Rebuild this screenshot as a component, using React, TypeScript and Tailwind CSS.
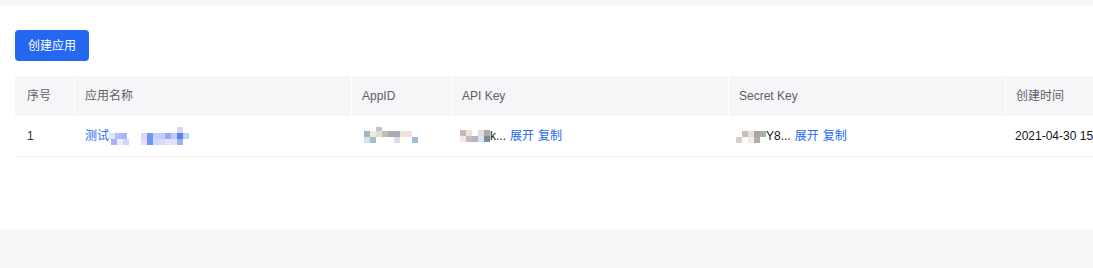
import React from "react";

type Cell = [number, number, string];

const Mosaic = ({ w, h, cells }: { w: number; h: number; cells: Cell[] }) => (
	<svg width={w} height={h} viewBox={`0 0 ${w} ${h}`} className="shrink-0 overflow-visible">
		{cells.map(([x, y, c], i) => (
			<rect key={i} x={x} y={y} width={6} height={6} fill={c} />
		))}
	</svg>
);

const nameCells: Cell[] = [
	[0, 6, "#dde8fb"],
	[6, 6, "#b4c0f5"],
	[12, 6, "#aab5f3"],
	[32, 6, "#d8d6f6"],
	[38, 6, "#6d97f0"],
	[44, 6, "#c8cff8"],
	[50, 6, "#c6c8f8"],
	[56, 6, "#9aa8f4"],
	[62, 6, "#c4c8f6"],
	[68, 6, "#5d7fe8"],
	[74, 6, "#b8d6fa"],
	[2, 12, "#a6b6f5"],
	[8, 12, "#e8ecfd"],
	[14, 12, "#d4d6f9"],
	[32, 12, "#e8defb"],
	[38, 12, "#6d97f0"],
	[44, 12, "#c4dcfb"],
	[50, 12, "#dcd8f8"],
	[56, 12, "#e6e2fb"],
	[62, 12, "#dfe3fb"],
	[68, 12, "#9fb2f2"],
	[68, 0, "#d4d8f8"],
];

const appIdCells: Cell[] = [
	[12, 0, "#c4c0cc"],
	[0, 4, "#a9b4bb"],
	[6, 4, "#f1ebdd"],
	[12, 4, "#e3dcd2"],
	[18, 4, "#c1bdb7"],
	[24, 4, "#aeacb2"],
	[30, 4, "#a9aab2"],
	[36, 4, "#f1e6d6"],
	[42, 4, "#f1dede"],
	[0, 10, "#d4e2ef"],
	[6, 10, "#9dc0cb"],
	[30, 10, "#d6dcec"],
	[48, 10, "#98c0d8"],
];

const apiCells: Cell[] = [
	[0, 2, "#cdb4c2"],
	[6, 2, "#ece4d9"],
	[18, 2, "#e4dcd8"],
	[24, 2, "#a9a8b0"],
	[0, 8, "#f0ece4"],
	[6, 8, "#c4bcc4"],
	[12, 8, "#b8b4c8"],
	[18, 8, "#d4e4f8"],
	[24, 8, "#7f8c98"],
];

const secretCells: Cell[] = [
	[6, 3, "#c4c0bc"],
	[12, 3, "#e8e0d8"],
	[18, 3, "#a8a4a4"],
	[24, 3, "#a4b0b0"],
	[0, 9, "#d4d0d0"],
	[12, 9, "#f4ece8"],
	[18, 9, "#b4b0a4"],
];

const cols = "grid grid-cols-[60px_277px_100px_277px_277px_240px]";

const headers = ["序号", "应用名称", "AppID", "API Key", "Secret Key", "创建时间"];

export default function App() {
	return (
		<div
			className="min-h-[268px] bg-[#f7f7f9] pt-[6px]"
			style={{ fontFamily: '"Liberation Sans", "Noto Sans CJK SC", Arial, sans-serif' }}
		>
			<div className="h-[223px] overflow-hidden bg-white pl-[15px] pt-[24px]">
				<button className="h-[31px] w-[74px] rounded-[4px] bg-[#2468f2] text-[12px] text-white">创建应用</button>
				<div className="mt-[15px] w-max">
					<div className={`${cols} h-[40px] bg-[#f6f6f8] text-[12px] text-[#5c5f66]`}>
						{headers.map((h, i) => (
							<div
								key={h}
								className={`flex items-center border-r border-white ${i === 0 ? "pl-[12px]" : "pl-[10px]"}`}
							>
								{h}
							</div>
						))}
					</div>
					<div className={`${cols} h-[41px] border-b border-[#eeeeef] text-[12px]`}>
						<div className="flex items-center pl-[12px] text-[#333]">1</div>
						<div className="flex items-center pl-[10px] text-[#2468f2]">
							<span>测试</span>
							<Mosaic w={80} h={18} cells={nameCells} />
						</div>
						<div className="flex items-center pl-[12px]">
							<Mosaic w={54} h={18} cells={appIdCells} />
						</div>
						<div className="flex items-center gap-[4px] pl-[8px] text-[#151515]">
							<span className="flex items-center">
								<Mosaic w={30} h={16} cells={apiCells} />
								<span>k...</span>
							</span>
							<span className="text-[#2468f2]">展开</span>
							<span className="text-[#2468f2]">复制</span>
						</div>
						<div className="flex items-center gap-[4px] pl-[7px] text-[#151515]">
							<span className="flex items-center">
								<Mosaic w={30} h={16} cells={secretCells} />
								<span>Y8...</span>
							</span>
							<span className="text-[#2468f2]">展开</span>
							<span className="text-[#2468f2]">复制</span>
						</div>
						<div className="flex items-center pl-[9px] text-[#151515]">2021-04-30 15:23:41</div>
					</div>
				</div>
			</div>
		</div>
	);
}
